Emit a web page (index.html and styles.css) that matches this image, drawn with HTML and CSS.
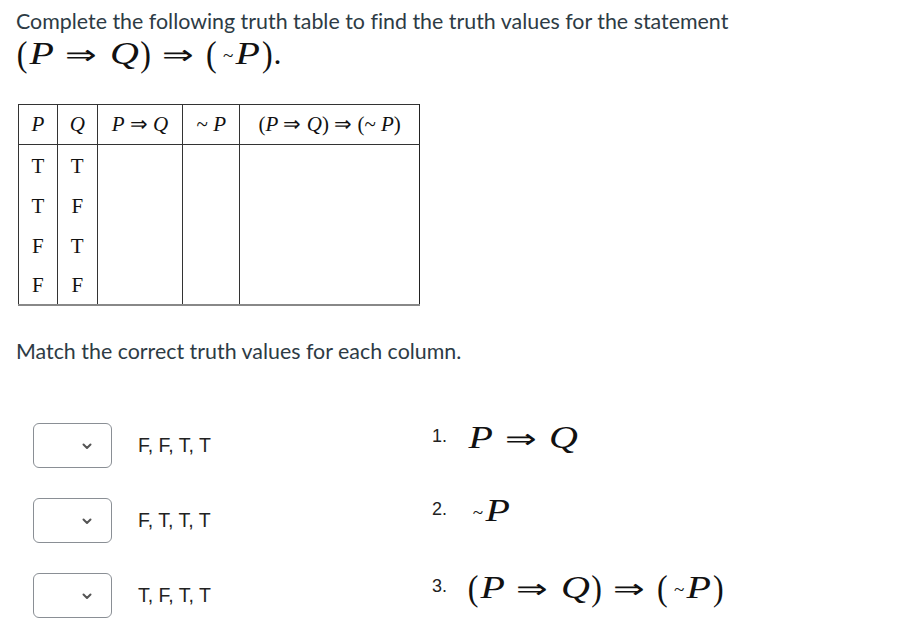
FILE: index.html
```html
<!DOCTYPE html>
<html>
<head>
<meta charset="utf-8">
<link rel="stylesheet" href="styles.css">
</head>
<body>
<div class="page">
  <p class="stem">Complete the following truth table to find the truth values for the statement</p>
  <p class="math big"><span class="par">(</span><i>P</i><span class="op"><span>⇒</span></span><i>Q</i><span class="par">)</span><span class="op"><span>⇒</span></span><span class="par">(</span><span class="tilde">~</span><i>P</i><span class="par">)</span>.</p>

  <table class="tt">
    <colgroup>
      <col class="c1"><col class="c2"><col class="c3"><col class="c4"><col class="c5">
    </colgroup>
    <thead>
      <tr>
        <th><i>P</i></th>
        <th><i>Q</i></th>
        <th><i>P</i> ⇒ <i>Q</i></th>
        <th>~ <i>P</i></th>
        <th>(<i>P</i> ⇒ <i>Q</i>) ⇒ (~ <i>P</i>)</th>
      </tr>
    </thead>
    <tbody>
      <tr><td>T</td><td>T</td><td></td><td></td><td></td></tr>
      <tr><td>T</td><td>F</td><td></td><td></td><td></td></tr>
      <tr><td>F</td><td>T</td><td></td><td></td><td></td></tr>
      <tr><td>F</td><td>F</td><td></td><td></td><td></td></tr>
    </tbody>
  </table>

  <p class="instr">Match the correct truth values for each column.</p>

  <div class="match">
    <div class="choices">
      <div class="choice">
        <div class="select"><svg class="chev" width="10" height="7" viewBox="0 0 10 7"><path d="M1.5 1.5 L5 5 L8.5 1.5" fill="none" stroke="#555" stroke-width="2" stroke-linecap="round" stroke-linejoin="round"/></svg></div>
        <span class="label">F, F, T, T</span>
      </div>
      <div class="choice">
        <div class="select"><svg class="chev" width="10" height="7" viewBox="0 0 10 7"><path d="M1.5 1.5 L5 5 L8.5 1.5" fill="none" stroke="#555" stroke-width="2" stroke-linecap="round" stroke-linejoin="round"/></svg></div>
        <span class="label">F, T, T, T</span>
      </div>
      <div class="choice">
        <div class="select"><svg class="chev" width="10" height="7" viewBox="0 0 10 7"><path d="M1.5 1.5 L5 5 L8.5 1.5" fill="none" stroke="#555" stroke-width="2" stroke-linecap="round" stroke-linejoin="round"/></svg></div>
        <span class="label">T, F, T, T</span>
      </div>
    </div>
    <ol class="answers">
      <li><span class="num">1.</span><span class="math mid"><i>P</i><span class="op"><span>⇒</span></span><i>Q</i></span></li>
      <li><span class="num">2.</span><span class="math mid"><span class="tilde">~</span><i>P</i></span></li>
      <li><span class="num">3.</span><span class="math mid"><span class="par">(</span><i>P</i><span class="op"><span>⇒</span></span><i>Q</i><span class="par">)</span><span class="op"><span>⇒</span></span><span class="par">(</span><span class="tilde">~</span><i>P</i><span class="par">)</span></span></li>
    </ol>
  </div>
</div>
</body>
</html>
```
FILE: styles.css
```css
* { box-sizing: border-box; }
html, body { margin: 0; padding: 0; background: #fff; }
body { color: #2d3b45; font-family: Lato, "Open Sans", sans-serif; }

.page { padding: 8px 16px 0 16px; }

.stem {
  margin: 0;
  font-size: 21.4px;
  line-height: 26px;
  color: #2d3b45;
  font-variant-ligatures: none;
}

.math {
  font-family: "Liberation Serif", "DejaVu Serif", serif;
  color: #111;
}
.math i {
  display: inline-block;
  font-style: italic;
  transform: scaleX(1.25);
  margin: 0 0.12em;
  line-height: 1;
}
.math .op {
  display: inline-block;
  width: 1em;
  margin: 0 0.34em;
  text-align: center;
  font-style: normal;
  line-height: 1;
}
.math .op span {
  display: inline-block;
  font-family: "DejaVu Sans", sans-serif;
  font-size: 0.85em;
  font-weight: 300;
  transform: scaleX(1.4);
  line-height: 1;
}
.math .par {
  display: inline-block;
  font-style: normal;
  transform: scaleY(1.15);
  margin: 0 0.02em;
  line-height: 1;
}
.math .tilde {
  display: inline-block;
  font-size: 0.6em;
  margin: 0 0.05em 0 0.3em;
  transform: translateY(-2px);
  line-height: 1;
}

.big {
  margin: 0;
  font-size: 32px;
  line-height: 38px;
  height: 38px;
}

.tt {
  margin-top: 32px;
  margin-left: 2px;
  border-collapse: collapse;
  width: 402px;
  font-family: "Liberation Serif", "Times New Roman", serif;
  font-size: 21px;
  color: #111;
  border-left: 1px solid #333;
  border-right: 1px solid #222;
  border-top: 1px solid #333;
  border-bottom: 2px solid #888;
}
.tt col.c1 { width: 39px; }
.tt col.c2 { width: 40px; }
.tt col.c3 { width: 86px; }
.tt col.c4 { width: 57px; }
.tt col.c5 { width: 180px; }
.tt th {
  font-weight: normal;
  height: 40px;
  padding: 0;
  border-left: 1px solid #333;
  border-bottom: 1px solid #333;
  text-align: center;
  white-space: nowrap;
}
.tt th:first-child, .tt td:first-child { border-left: none; }
.tt td {
  height: 40px;
  padding: 0;
  border-left: 1px solid #333;
  text-align: center;
}
.tt tbody tr:first-child td { height: 42px; padding-top: 2px; }
.tt tbody tr:last-child td { height: 38px; }

.instr {
  margin: 32px 0 0 0;
  font-size: 21.4px;
  line-height: 26px;
  color: #2d3b45;
}

.match {
  display: flex;
  margin-top: 59px;
}

.choices {
  display: flex;
  flex-direction: column;
  gap: 30px;
  margin-left: 17px;
  width: 399px;
  flex: none;
}
.choice {
  display: flex;
  align-items: center;
  gap: 26px;
}
.select {
  width: 79px;
  height: 45px;
  border: 1px solid #8a8f95;
  border-radius: 6px;
  display: flex;
  align-items: center;
  justify-content: flex-end;
  padding-right: 19px;
  flex: none;
}
.chev { display: block; margin-top: 2px; }
.label {
  font-family: "Liberation Sans", Arial, sans-serif;
  font-size: 19.5px;
  color: #222;
}

.answers {
  list-style: none;
  margin: -4px 0 0 0;
  padding: 0;
  display: flex;
  flex-direction: column;
}
.answers li {
  display: flex;
  align-items: center;
  height: 36px;
  margin-bottom: 37px;
}
.answers li:nth-child(2) { margin-bottom: 41px; }
.num {
  font-family: "Liberation Sans", Arial, sans-serif;
  font-size: 18px;
  color: #222;
  width: 35px;
  flex: none;
}
.mid {
  font-size: 32px;
  line-height: 36px;
  white-space: nowrap;
}
```
